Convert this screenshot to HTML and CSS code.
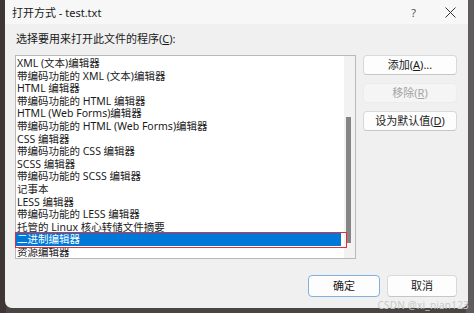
FILE: index.html
```html
<!DOCTYPE html>
<html lang="zh-CN">
<head>
<meta charset="utf-8">
<title>打开方式</title>
<link rel="stylesheet" href="styles.css">
</head>
<body>
<div class="dialog">
  <div class="titlebar">
    <span class="title">打开方式 - test.txt</span>
    <span class="help">?</span>
    <span class="close">
      <svg width="11" height="11" viewBox="0 0 11 11"><path d="M0.5 0.5 L10.5 10.5 M10.5 0.5 L0.5 10.5" stroke="#333" stroke-width="1" fill="none"/></svg>
    </span>
  </div>
  <div class="client">
    <div class="label">选择要用来打开此文件的程序(<u>C</u>):</div>
    <div class="main">
      <div class="listbox">
        <ul class="items">
          <li>XML (文本)编辑器</li>
          <li>带编码功能的 XML (文本)编辑器</li>
          <li>HTML 编辑器</li>
          <li>带编码功能的 HTML 编辑器</li>
          <li>HTML (Web Forms)编辑器</li>
          <li>带编码功能的 HTML (Web Forms)编辑器</li>
          <li>CSS 编辑器</li>
          <li>带编码功能的 CSS 编辑器</li>
          <li>SCSS 编辑器</li>
          <li>带编码功能的 SCSS 编辑器</li>
          <li>记事本</li>
          <li>LESS 编辑器</li>
          <li>带编码功能的 LESS 编辑器</li>
          <li>托管的 Linux 核心转储文件摘要</li>
          <li class="selected"><span class="sel-bg">二进制编辑器</span></li>
          <li>资源编辑器</li>
        </ul>
        <div class="scrollbar"><div class="thumb"></div></div>
      </div>
      <div class="side">
        <button class="btn">添加(<u>A</u>)...</button>
        <button class="btn disabled">移除(<u>R</u>)</button>
        <button class="btn">设为默认值(<u>D</u>)</button>
      </div>
    </div>
    <div class="footer">
      <button class="btn ok">确定</button>
      <button class="btn cancel">取消</button>
    </div>
  </div>
</div>
<div class="watermark">CSDN @xi_nian123</div>
</body>
</html>
```
FILE: styles.css
```css
html, body {
  margin: 0;
  padding: 0;
}
body {
  width: 474px;
  height: 313px;
  overflow: hidden;
  background: linear-gradient(90deg, #3e3535 0px, #3e3535 6px, #4a4443 6px, #4a4443 466px, #5e5c5c 466px);
  font-family: "Noto Sans", "Noto Sans CJK SC", sans-serif;
  font-size: 11px;
  color: #1a1a1a;
  position: relative;
  padding-left: 5px;
  box-sizing: border-box;
}
.dialog {
  width: 463px;
  height: 308px;
  background: #f0f0f0;
  border-radius: 0 0 7px 7px;
  display: flex;
  flex-direction: column;
  overflow: hidden;
}
.titlebar {
  height: 24px;
  background: #f7f7f7;
  display: flex;
  align-items: center;
  padding-left: 7px;
  padding-right: 12px;
  box-sizing: border-box;
  flex: none;
}
.title {
  flex: 1;
  font-size: 11px;
  color: #1a1a1a;
}
.help {
  color: #555;
  font-size: 11px;
  margin-right: 29px;
}
.close {
  display: flex;
  align-items: center;
}
.client {
  flex: 1;
  padding: 8px 11px 0 10px;
  display: flex;
  flex-direction: column;
}
.label {
  line-height: 14px;
  margin-left: 1px;
  margin-bottom: 9px;
}
.main {
  display: flex;
  gap: 7px;
}
.listbox {
  width: 341px;
  height: 204px;
  box-sizing: border-box;
  background: #fff;
  border: 1px solid #b9b9b9;
  display: flex;
}
.items {
  list-style: none;
  margin: 0;
  padding: 1px 0 0 0;
  flex: 1;
  font-size: 10.5px;
}
.items li {
  height: 12.6px;
  line-height: 12.6px;
  padding-left: 1px;
  white-space: nowrap;
}
.items li.selected {
  position: relative;
  padding-left: 0;
  padding-right: 3px;
}
.sel-bg {
  display: block;
  background: #0078d7;
  color: #fff;
  padding-left: 1px;
  height: 13px;
  line-height: 13px;
}
.items li.selected::after {
  content: "";
  position: absolute;
  left: -1px;
  top: -1px;
  right: -3px;
  bottom: -2px;
  border: 1.5px solid #e0303a;
}
.scrollbar {
  width: 11px;
  background: #f2f2f2;
  flex: none;
  padding-top: 61px;
  padding-left: 2px;
  box-sizing: border-box;
}
.thumb {
  width: 5px;
  height: 126px;
  background: #858585;
}
.side {
  display: flex;
  flex-direction: column;
  gap: 8px;
}
.btn {
  font-family: inherit;
  font-size: 11px;
  color: #1a1a1a;
  background: #fdfdfd;
  border: 1px solid #d9d9d9;
  border-bottom-color: #c6c6c6;
  border-radius: 4px;
  width: 94px;
  height: 20px;
  padding: 0;
  line-height: 18px;
}
.btn.disabled {
  background: #f5f5f5;
  color: #a3a3a3;
  border-color: #ececec;
}
.footer {
  display: flex;
  justify-content: flex-end;
  gap: 7px;
  margin-top: 16px;
}
.btn.ok {
  width: 72px;
  height: 22px;
  border: 1px solid #7fb0df;
}
.btn.cancel {
  width: 70px;
  height: 22px;
}
.watermark {
  position: absolute;
  right: 5px;
  bottom: 1px;
  font-size: 10px;
  color: #c8c8c8;
  letter-spacing: 0.2px;
}
```
